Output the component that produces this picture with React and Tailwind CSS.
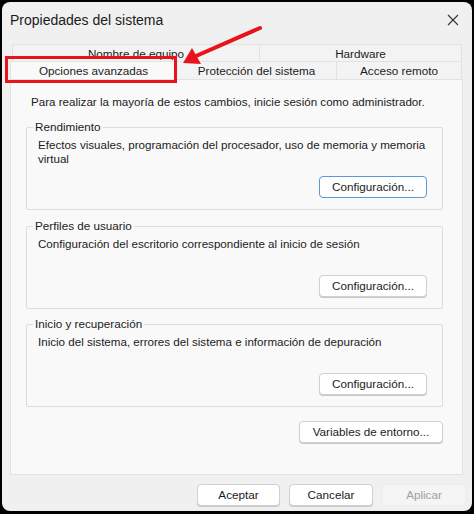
export default function App() {
  const font = { fontFamily: '"Segoe UI", "Liberation Sans", Arial, sans-serif' };

  const Btn = ({ children, focus, disabled, className = "" }) => (
    <div
      className={`flex h-[22px] items-center justify-center rounded-[4px] border text-[11.7px] ${
        focus
          ? "border-[#5b9bd5] bg-white text-[#1b1b1b]"
          : disabled
          ? "border-[#ededed] bg-[#f5f5f5] text-[#a0a0a0]"
          : "border-[#d0d0d0] bg-white text-[#1b1b1b] shadow-[0_1px_0_#c8c8c8]"
      } ${className}`}
    >
      {children}
    </div>
  );

  const Group = ({ title, text, focus }) => (
    <div className="relative ml-[15px] mr-[19px] mt-[8px] rounded-[2px] border border-[#dcdcdc] px-[11px] pb-[11px] pt-[10px]">
      <div className="absolute left-[6px] top-[-9px] bg-[#f9f9f9] px-[2px] text-[11.7px] leading-[16px] text-[#1b1b1b]">
        {title}
      </div>
      <div className="min-h-[38px] text-[11.6px] leading-[14px] text-[#1b1b1b]">{text}</div>
      <div className="flex justify-end pr-[4px]">
        <Btn focus={focus} className="w-[108px]">Configuración...</Btn>
      </div>
    </div>
  );

  return (
    <div className="relative h-[514px] w-[474px] overflow-hidden bg-black" style={font}>
      <div className="absolute left-[2px] top-[2px] flex h-[509px] w-[470px] flex-col rounded-[8px] bg-[#f0f0f0]">
        {/* title bar */}
        <div className="flex h-[36px] items-center justify-between pl-[8px] pr-[12px]">
          <span className="text-[14px] text-[#1b1b1b]">Propiedades del sistema</span>
          <svg width="12" height="12" viewBox="0 0 12 12" className="mr-[1px]">
            <path d="M1 1 L11 11 M11 1 L1 11" stroke="#333" strokeWidth="1.1" />
          </svg>
        </div>

        {/* tabs */}
        <div className="ml-[8px] mt-[6px] w-[452px]">
          <div className="ml-[2px] flex h-[17px] text-[11.7px] leading-[17px] text-[#1b1b1b]">
            <div className="w-[248px] border border-b-0 border-[#e2e2e2] bg-[#f3f3f3] text-center">Nombre de equipo</div>
            <div className="w-[202px] border border-b-0 border-l-0 border-[#e2e2e2] bg-[#f3f3f3] text-center">Hardware</div>
          </div>
          <div className="flex h-[18px] text-[11.7px] leading-[18px] text-[#1b1b1b]">
            <div className="w-[167px] border border-b-0 border-[#e2e2e2] bg-[#f9f9f9] text-center">Opciones avanzadas</div>
            <div className="w-[160px] border border-b-0 border-l-0 border-[#e2e2e2] bg-[#f3f3f3] text-center">Protección del sistema</div>
            <div className="w-[125px] border border-b-0 border-l-0 border-[#e2e2e2] bg-[#f3f3f3] text-center">Acceso remoto</div>
          </div>
        </div>

        {/* panel */}
        <div className="ml-[8px] flex h-[396px] w-[453px] flex-col border border-[#e2e2e2] bg-[#f9f9f9]">
          <div className="pl-[20px] pt-[14px] text-[11.6px] leading-[16px] text-[#1b1b1b]">
            Para realizar la mayoría de estos cambios, inicie sesión como administrador.
          </div>
          <div className="mt-[9px]">
            <Group
              title="Rendimiento"
              text="Efectos visuales, programación del procesador, uso de memoria y memoria virtual"
              focus
            />
          </div>
          <div className="mt-[8px]">
            <Group title="Perfiles de usuario" text="Configuración del escritorio correspondiente al inicio de sesión" />
          </div>
          <div className="mt-[7px]">
            <Group title="Inicio y recuperación" text="Inicio del sistema, errores del sistema e información de depuración" />
          </div>
          <div className="mt-[14px] flex justify-end pr-[19px]">
            <Btn className="w-[144px]">Variables de entorno...</Btn>
          </div>
        </div>

        {/* footer buttons */}
        <div className="mt-[9px] flex justify-end gap-[9px] pr-[6px]">
          <Btn className="w-[83px]">Aceptar</Btn>
          <Btn className="w-[84px]">Cancelar</Btn>
          <Btn disabled className="w-[84px]">Aplicar</Btn>
        </div>
      </div>

      {/* red highlight box */}
      <div className="absolute left-[5px] top-[56px] h-[27px] w-[172px] border-[3px] border-[#e8141c]" />

      {/* red arrow */}
      <svg className="absolute left-0 top-0" width="474" height="514" viewBox="0 0 474 514">
        <path d="M260 28 L196 56" stroke="#e8141c" strokeWidth="4" strokeLinecap="round" />
        <path d="M183 63 L192 48 L201 64 Z" fill="#e8141c" />
      </svg>
    </div>
  );
}
